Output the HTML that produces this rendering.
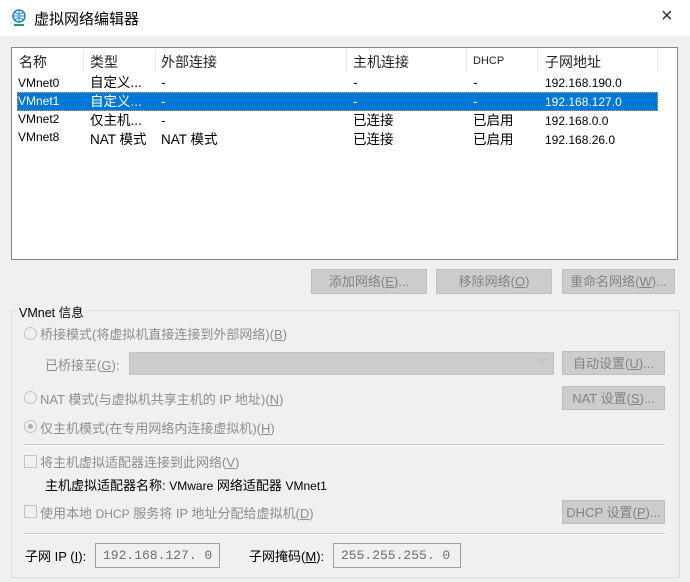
<!DOCTYPE html>
<html><head><meta charset="utf-8"><style>
*{margin:0;padding:0;box-sizing:border-box}
body{width:690px;height:582px;background:#f0f0f0;font-family:"Liberation Sans","Noto Sans CJK SC",sans-serif;font-size:13px;color:#000;position:relative;overflow:hidden}
.a{position:absolute;white-space:nowrap}
.title{left:0;top:0;width:690px;height:36px;background:#fff}
.list{left:11px;top:47px;width:667px;height:213px;background:#fff;border:1px solid #828790}
.hs{position:absolute;top:2px;width:1px;height:22px;background:#e5e5e5}
.btn{position:absolute;background:#cccccc;border:1px solid #bfbfbf;color:#838383;text-align:center;font-size:13px;line-height:23px}
.g{color:#8d8d8d}
.radio{position:absolute;width:13px;height:13px;border:1px solid #c4c4c4;border-radius:50%;background:#f0f0f0}
.chk{position:absolute;width:13px;height:13px;border:1px solid #c4c4c4;background:#f0f0f0}
.fld{position:absolute;height:25px;border:1px solid #a0a0a0;background:#f0f0f0;color:#6d6d6d;font-family:"Liberation Mono",monospace;font-size:13px;line-height:23px;padding-left:7px}
u{text-decoration:underline}
</style></head><body>
<div class="a title"></div>
<svg class="a" style="left:11px;top:9px" width="16" height="18" viewBox="0 0 16 18"><circle cx="8" cy="7" r="6" fill="#fff" stroke="#1e88c8" stroke-width="1.6"/><path d="M2 7h12M8 1v12M4 3.5q4 3 8 0M4 10.5q4-3 8 0" stroke="#1e88c8" stroke-width="1" fill="none"/><rect x="3" y="15" width="10" height="2" fill="#2a9d5a"/></svg>
<div class="a" style="left:34px;top:8px;font-size:15px">虚拟网络编辑器</div>
<div class="a" style="left:661px;top:5px;font-size:20px;font-weight:300;color:#333">×</div>

<div class="a list">
 <div class="hs" style="left:71px"></div><div class="hs" style="left:143px"></div><div class="hs" style="left:334px"></div><div class="hs" style="left:454px"></div><div class="hs" style="left:525px"></div><div class="hs" style="left:645px"></div>
 <div class="a" style="left:7px;top:4px;font-size:14px;color:#222">名称</div>
 <div class="a" style="left:78px;top:4px;font-size:14px;color:#222">类型</div>
 <div class="a" style="left:149px;top:4px;font-size:14px;color:#222">外部连接</div>
 <div class="a" style="left:341px;top:4px;font-size:14px;color:#222">主机连接</div>
 <div class="a" style="left:461px;top:7px;font-size:11px;color:#222">DHCP</div>
 <div class="a" style="left:533px;top:4px;font-size:14px;color:#222">子网地址</div>
 <div class="a" style="left:5px;top:44px;width:641px;height:19px;background:#0078d7;border:1px dotted #e0a060"></div>
 <div class="a" style="left:6px;top:26px;line-height:18px;font-size:12px">VMnet0<br><span style="color:#fff">VMnet1</span><br>VMnet2<br>VMnet8</div>
 <div class="a" style="left:78px;top:25px;line-height:19px;font-size:13.5px">自定义...<br><span style="color:#fff">自定义...</span><br>仅主机...<br>NAT 模式</div>
 <div class="a" style="left:149px;top:25px;line-height:19px;font-size:13.5px">-<br><span style="color:#fff">-</span><br>-<br>NAT 模式</div>
 <div class="a" style="left:341px;top:25px;line-height:19px;font-size:13.5px">-<br><span style="color:#fff">-</span><br>已连接<br>已连接</div>
 <div class="a" style="left:461px;top:25px;line-height:19px;font-size:13.5px">-<br><span style="color:#fff">-</span><br>已启用<br>已启用</div>
 <div class="a" style="left:533px;top:26px;line-height:19px;font-size:12px">192.168.190.0<br><span style="color:#fff">192.168.127.0</span><br>192.168.0.0<br>192.168.26.0</div>
</div>

<div class="btn" style="left:311px;top:269px;width:116px;height:25px">添加网络(<u>E</u>)...</div>
<div class="btn" style="left:436px;top:269px;width:116px;height:25px">移除网络(<u>O</u>)</div>
<div class="btn" style="left:562px;top:269px;width:113px;height:25px">重命名网络(<u>W</u>)...</div>

<div class="a" style="left:11px;top:310px;width:669px;height:268px;border:1px solid #dcdcdc"></div>
<div class="a" style="left:18px;top:302px;background:#f0f0f0;padding:0 1px;font-size:12.5px">VMnet 信息</div>

<div class="radio" style="left:24px;top:327px"></div>
<div class="a g" style="left:40px;top:324px">桥接模式(将虚拟机直接连接到外部网络)(<u>B</u>)</div>
<div class="a g" style="left:45px;top:355px">已桥接至(<u>G</u>):</div>
<div class="a" style="left:129px;top:352px;width:425px;height:23px;background:#cccccc;border:1px solid #c4c4c4"></div>
<div class="a" style="left:537px;top:354px;color:#aaa;font-size:11px">⌵</div>
<div class="btn" style="left:562px;top:351px;width:103px;height:24px">自动设置(<u>U</u>)...</div>

<div class="radio" style="left:24px;top:391px"></div>
<div class="a g" style="left:40px;top:389px">NAT 模式(与虚拟机共享主机的 IP 地址)(<u>N</u>)</div>
<div class="btn" style="left:562px;top:386px;width:103px;height:24px">NAT 设置(<u>S</u>)...</div>

<div class="radio" style="left:24px;top:420px"></div>
<div class="a" style="left:28px;top:424px;width:5px;height:5px;border-radius:50%;background:#b0b0b0"></div>
<div class="a g" style="left:40px;top:418px">仅主机模式(在专用网络内连接虚拟机)(<u>H</u>)</div>

<div class="a" style="left:24px;top:444px;width:641px;height:2px;border-top:1px solid #c8c8c8;border-bottom:1px solid #fff"></div>
<div class="chk" style="left:24px;top:455px"></div>
<div class="a g" style="left:40px;top:452px">将主机虚拟适配器连接到此网络(<u>V</u>)</div>
<div class="a" style="left:45px;top:475px;font-size:13px">主机虚拟适配器名称: <span style="font-size:12px">VMware</span> 网络适配器 <span style="font-size:12px">VMnet1</span></div>
<div class="chk" style="left:24px;top:505px"></div>
<div class="a g" style="left:40px;top:503px">使用本地 <span style="font-size:12px">DHCP</span> 服务将 IP 地址分配给虚拟机(<u>D</u>)</div>
<div class="btn" style="left:562px;top:500px;width:103px;height:24px">DHCP 设置(<u>P</u>)...</div>
<div class="a" style="left:24px;top:533px;width:641px;height:2px;border-top:1px solid #c8c8c8;border-bottom:1px solid #fff"></div>

<div class="a" style="left:25px;top:546px">子网 IP (<u>I</u>):</div>
<div class="fld" style="left:95px;top:543px;width:125px">192.168.127. 0</div>
<div class="a" style="left:249px;top:546px">子网掩码(<u>M</u>):</div>
<div class="fld" style="left:333px;top:543px;width:128px">255.255.255. 0</div>
</body></html>
